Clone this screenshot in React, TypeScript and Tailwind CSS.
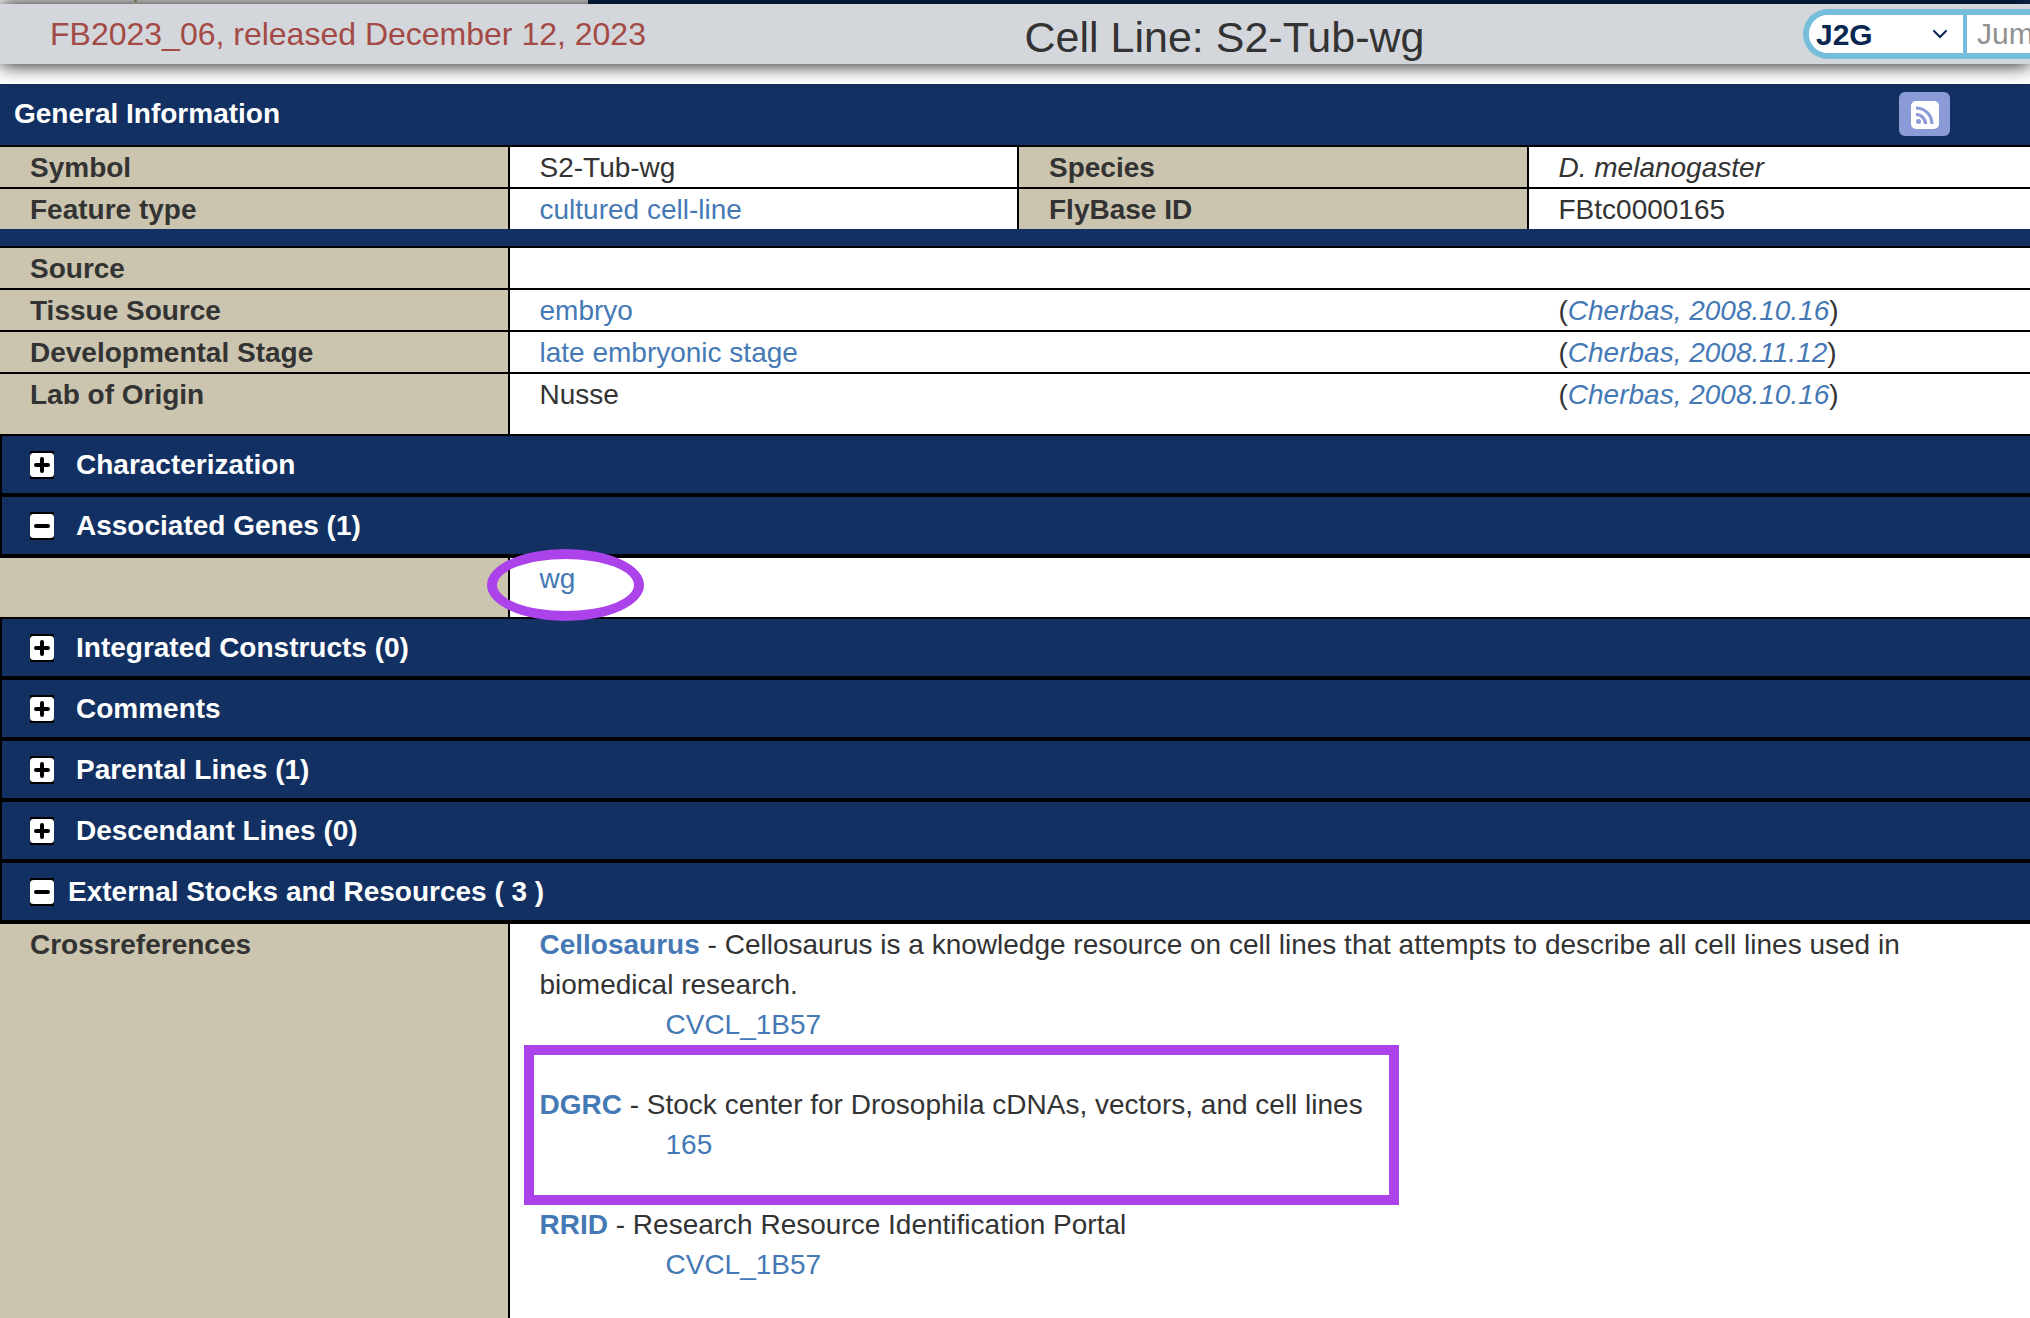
import { useState, type ReactNode } from "react";

const linkClass = "text-[#4579b5] hover:underline";
const labelClass = "border-t-2 border-r-2 border-black bg-[#cbc5af] pt-px pl-[30px] text-left align-top font-bold";
const valueClass = "border-t-2 border-black bg-white pt-px pl-[30px] align-top";
const rowClass = "leading-[39px]";

interface SourceRow {
  label: string;
  value?: string;
  href?: string;
  reference?: string;
}

const sourceRows: SourceRow[] = [
  { label: "Source" },
  { label: "Tissue Source", value: "embryo", href: "#embryo", reference: "Cherbas, 2008.10.16" },
  { label: "Developmental Stage", value: "late embryonic stage", href: "#stage", reference: "Cherbas, 2008.11.12" },
  { label: "Lab of Origin", value: "Nusse", reference: "Cherbas, 2008.10.16" },
];

function ToggleIcon({ open }: { open: boolean }) {
  return (
    <svg width="24" height="28" viewBox="0 0 24 28" aria-hidden="true" className="shrink-0">
      <rect width="24" height="28" fill="#000" />
      <rect y="2" width="24" height="24" rx="3.5" fill="#fff" />
      <path
        d={open ? "M6 14H18" : "M6 14H18M12 8V20"}
        stroke="#000"
        strokeWidth="4"
        strokeLinecap="round"
      />
    </svg>
  );
}

interface SectionProps {
  title: string;
  defaultOpen?: boolean;
  tight?: boolean;
  children?: ReactNode;
}

function Section({ title, defaultOpen = false, tight, children }: SectionProps) {
  const [open, setOpen] = useState(defaultOpen);

  return (
    <section>
      <h2 className="border-2 border-black bg-[#123162] font-bold text-white">
        <button
          type="button"
          aria-expanded={open}
          onClick={() => setOpen(!open)}
          className="flex w-full items-center pt-[9px] pb-2 pl-7 text-left"
        >
          <ToggleIcon open={open} />
          <span className={tight ? "ml-3.5" : "ml-[22px]"}>{title}</span>
        </button>
      </h2>
      {open && children}
    </section>
  );
}

interface CrossreferenceProps {
  name: string;
  description: string;
  id: string;
}

function Crossreference({ name, description, id }: CrossreferenceProps) {
  return (
    <>
      <p>
        <a href={`#${name}`} className={`${linkClass} font-bold`}>
          {name}
        </a>{" "}
        - {description}
      </p>
      <p className="pl-[126px]">
        <a href={`#${name}-${id}`} className={linkClass}>
          {id}
        </a>
      </p>
    </>
  );
}

function PageHeader() {
  return (
    <header className="relative mb-5 flex h-[60px] items-center justify-between bg-[#d3d6db] pl-[50px] shadow-[0_0_20px_#000]">
      <p className="text-[32px] text-[#a34a45]">FB2023_06, released December 12, 2023</p>
      <h1 className="pt-1.5 text-[43px]">Cell Line: S2-Tub-wg</h1>
      <form className="flex h-[50px] w-[227px] shrink-0 overflow-hidden rounded-l-full border-6 border-r-0 border-[#74bddb] bg-white text-[30px]">
        <div className="relative w-[158px] shrink-0 border-r-4 border-[#74bddb]">
          <select
            aria-label="Search type"
            className="h-full w-full appearance-none bg-white pl-[7px] font-bold text-[#0a2750] outline-none"
          >
            <option>J2G</option>
          </select>
          <svg
            width="14"
            height="9"
            viewBox="0 0 14 9"
            aria-hidden="true"
            className="pointer-events-none absolute top-[15px] right-4"
          >
            <path d="M1 1L7 7L13 1" fill="none" stroke="#0a2750" strokeWidth="2" strokeLinecap="round" />
          </svg>
        </div>
        <input
          type="text"
          aria-label="Jump to Gene"
          placeholder="Jump to Gene"
          className="w-[300px] shrink-0 bg-white pl-2.5 outline-none placeholder:text-[#909090]"
        />
      </form>
    </header>
  );
}

export default function App() {
  return (
    <div className="min-h-screen overflow-hidden bg-white font-['Liberation_Sans',Arial,sans-serif] text-[28px] leading-10 text-[#333]">
      <div className="flex h-1">
        <div className="w-[588px] pl-[134px]">
          <div className="h-0.5 w-[3px] bg-[#c4c27a]" />
        </div>
        <div className="flex-1 bg-[#0c2757]" />
      </div>

      <PageHeader />

      <main className="-mr-2">
        <div className="flex h-[61px] items-center justify-between bg-[#123162] pr-[88px] pl-3.5">
          <h2 className="pb-0.5 font-bold text-white">General Information</h2>
          <button
            type="button"
            aria-label="RSS feed"
            className="mb-0.5 flex h-11 w-[51px] items-center justify-center rounded-md bg-[#8b9bd7] pt-0.5"
          >
            <svg width="28" height="28" viewBox="0 0 28 28" aria-hidden="true">
              <rect width="28" height="28" rx="5" fill="#fff" />
              <circle cx="7.5" cy="20.5" r="2.5" fill="#8b9bd7" />
              <path
                d="M5 13.5A9.5 9.5 0 0 1 14.500 23M5 7A16 16 0 0 1 21 23"
                fill="none"
                stroke="#8b9bd7"
                strokeWidth="3.2"
              />
            </svg>
          </button>
        </div>

        <table className="w-full table-fixed border-separate border-spacing-0">
          <tbody>
            <tr className={rowClass}>
              <th scope="row" className={labelClass}>Symbol</th>
              <td className={`${valueClass} border-r-2`}>S2-Tub-wg</td>
              <th scope="row" className={labelClass}>Species</th>
              <td className={`${valueClass} italic`}>D. melanogaster</td>
            </tr>
            <tr className={rowClass}>
              <th scope="row" className={labelClass}>Feature type</th>
              <td className={`${valueClass} border-r-2`}>
                <a href="#cell-line" className={linkClass}>cultured cell-line</a>
              </td>
              <th scope="row" className={labelClass}>FlyBase ID</th>
              <td className={valueClass}>FBtc0000165</td>
            </tr>
          </tbody>
        </table>

        <div className="h-[17px] bg-[#123162]" />

        <table className="w-full table-fixed border-separate border-spacing-0">
          <colgroup>
            <col className="w-1/4" />
            <col className="w-1/2" />
            <col className="w-1/4" />
          </colgroup>
          <tbody>
            {sourceRows.map((row) => (
              <tr key={row.label} className={`${rowClass} last:h-[62px]`}>
                <th scope="row" className={labelClass}>{row.label}</th>
                <td className={valueClass}>
                  {row.href ? (
                    <a href={row.href} className={linkClass}>{row.value}</a>
                  ) : (
                    row.value
                  )}
                </td>
                <td className={valueClass}>
                  {row.reference && (
                    <>
                      (<a href="#reference" className={`${linkClass} italic`}>{row.reference}</a>)
                    </>
                  )}
                </td>
              </tr>
            ))}
          </tbody>
        </table>

        <Section title="Characterization" />

        <Section title="Associated Genes (1)" defaultOpen>
          <table className="w-full table-fixed border-separate border-spacing-0">
            <tbody>
              <tr className="h-[61px]">
                <th aria-label="Gene" className={`${labelClass} w-1/4`} />
                <td className={valueClass}>
                  <span className="relative inline-block">
                    <a href="#wg" className={linkClass}>wg</a>
                    {/* highlight ring around the gene link */}
                    <span className="pointer-events-none absolute -top-2.5 -left-[53px] h-[72px] w-[157px] rounded-[50%] border-10 border-[#ac42ea]" />
                  </span>
                </td>
              </tr>
            </tbody>
          </table>
        </Section>

        <Section title="Integrated Constructs (0)" />
        <Section title="Comments" />
        <Section title="Parental Lines (1)" />
        <Section title="Descendant Lines (0)" />

        <Section title="External Stocks and Resources ( 3 )" defaultOpen tight>
          <table className="w-full table-fixed border-separate border-spacing-0">
            <tbody>
              <tr>
                <th scope="row" className={`${labelClass} w-1/4`}>Crossreferences</th>
                <td className={`${valueClass} pr-10 pb-[34px]`}>
                  <Crossreference
                    name="Cellosaurus"
                    description="Cellosaurus is a knowledge resource on cell lines that attempts to describe all cell lines used in biomedical research."
                    id="CVCL_1B57"
                  />
                  <div className="relative w-fit py-10">
                    <Crossreference
                      name="DGRC"
                      description="Stock center for Drosophila cDNAs, vectors, and cell lines"
                      id="165"
                    />
                    <div className="pointer-events-none absolute inset-y-0 -right-9 -left-4 border-10 border-[#ac42ea]" />
                  </div>
                  <Crossreference
                    name="RRID"
                    description="Research Resource Identification Portal"
                    id="CVCL_1B57"
                  />
                </td>
              </tr>
            </tbody>
          </table>
        </Section>
      </main>
    </div>
  );
}
